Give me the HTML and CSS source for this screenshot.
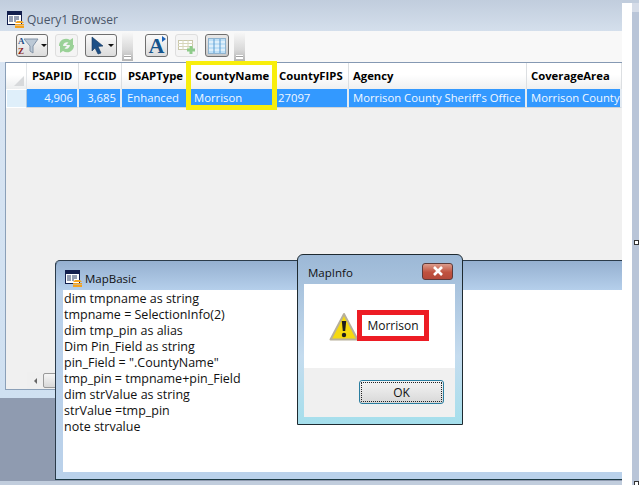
FILE: index.html
```html
<!DOCTYPE html>
<html lang="en">
<head>
<meta charset="utf-8">
<title>Query1 Browser</title>
<link rel="stylesheet" href="styles.css">
</head>
<body>
<div class="desktop">
  <section class="window browser">
    <header class="browser-title">
      <svg class="win-icon" width="17" height="17" viewBox="0 0 17 17"><rect x="0.5" y="0.5" width="14" height="13" fill="#fff" stroke="#14204e"/><rect x="1" y="1" width="13" height="3" fill="#14204e"/><path d="M2 6h4M7 6h5M2 8h4M7 8h5M2 10h4M7 10h2" stroke="#2d3f66"/><path d="M10 10h5l2 2H8zM8 13h9v1.500H8zM8 15h9v2H8z" fill="#f4a21f"/></svg>
      <span>Query1 Browser</span>
    </header>
    <div class="toolbar">
      <button class="tool drop w32 after-filter"><svg width="22" height="19" viewBox="0 0 22 19"><path d="M7 3h14l-5 7v7l-3-2v-5z" fill="#bcc9d6" stroke="#8394a8"/><text x="1" y="8" class="az az-a">A</text><text x="1" y="18" class="az az-z">Z</text></svg><i class="caret"></i></button>
      <button class="tool flat w23"><svg width="19" height="19" viewBox="0 0 19 19"><path d="M2 10a7 7 0 0 1 11-6l3-2v7H9l2.500-2.500A4 4 0 0 0 6 10zM17 9a7 7 0 0 1-11 6l-3 2v-7h7l-2.500 2.500A4 4 0 0 0 13 9z" fill="#9ad197"/></svg></button>
      <button class="tool drop w32"><svg width="17" height="19" viewBox="0 0 17 19"><path d="M3 1l11 9-5 .5 3 6.500-3 1-3-6-3 3z" fill="#1d4f86" stroke="#14375e" stroke-width=".6"/></svg><i class="caret"></i></button>
      <div class="grip"><i></i></div>
      <button class="tool w23 gap-wide font-tool"><span class="big-a">A</span><i class="font-mark"></i></button>
      <button class="tool flat w23"><svg width="20" height="18" viewBox="0 0 20 18"><rect x="1.500" y="3.500" width="14" height="9" fill="#fff" stroke="#c9c7a8"/><path d="M1 6.500h15M6 3v10M11 3v10M1 9.500h15" stroke="#d8d6b9"/><path d="M14 9v8M10 13h8" stroke="#8ecb8a" stroke-width="3"/></svg></button>
      <button class="tool w24 selected"><svg width="18" height="16" viewBox="0 0 18 16"><rect x="0.500" y="0.500" width="17" height="15" fill="#bfe0f7" stroke="#8fb3cf"/><path d="M1 4h16M1 8h16M1 12h16" stroke="#fff"/><path d="M6 1v14M12 1v14" stroke="#5a9bd0"/></svg></button>
      <div class="grip"><i></i></div>
    </div>
    <div class="table">
      <div class="corner"><svg width="12" height="12" viewBox="0 0 12 12"><path d="M11 1v10H1z" fill="#d7d9db"/></svg></div>
      <div class="th pad5">PSAPID</div>
      <div class="th pad5">FCCID</div>
      <div class="th pad6">PSAPType</div>
      <div class="th pad6">CountyName</div>
      <div class="th pad5">CountyFIPS</div>
      <div class="th">Agency</div>
      <div class="th">CoverageArea</div>
      <div class="row-head"></div>
      <div class="td num">4,906</div>
      <div class="td num">3,685</div>
      <div class="td pad5">Enhanced</div>
      <div class="td pad5">Morrison</div>
      <div class="td">27097</div>
      <div class="td">Morrison County Sheriff's Office</div>
      <div class="td">Morrison County</div>
    </div>
    <div class="table-rest">
      <div class="hscroll"><span class="arrow"></span><span class="thumb"></span></div>
    </div>
  </section>

  <div class="backdrop"></div>
  <div class="side-gutter"><i class="handle handle-mid"></i><i class="handle handle-low"></i></div>
  <div class="mark-yellow"></div>

  <section class="window mapbasic">
    <header class="mb-title">
      <svg class="win-icon" width="17" height="17" viewBox="0 0 17 17"><rect x="0.5" y="0.5" width="14" height="13" fill="#fff" stroke="#14204e"/><rect x="1" y="1" width="13" height="3" fill="#14204e"/><path d="M2 6h4M7 6h5M2 8h4M7 8h5M2 10h4M7 10h2" stroke="#2d3f66"/><path d="M10 10h5l2 2H8zM8 13h9v1.500H8zM8 15h9v2H8z" fill="#f4a21f"/></svg>
      <span>MapBasic</span>
    </header>
    <pre class="code">dim tmpname as string
tmpname = SelectionInfo(2)
dim tmp_pin as alias
Dim Pin_Field as string
pin_Field = ".CountyName"
tmp_pin = tmpname+pin_Field
dim strValue as string
strValue =tmp_pin
note strvalue</pre>
  </section>

  <section class="window dialog">
    <header class="dlg-title">
      <span>MapInfo</span>
      <button class="close"><svg width="14" height="10" viewBox="0 0 14 10"><path d="M3 1l8 8M11 1L3 9" stroke="#fff" stroke-width="2.600"/></svg></button>
    </header>
    <div class="dlg-body">
      <div class="dlg-msg">
        <svg class="warn" width="30" height="29" viewBox="0 0 30 29"><path d="M15 2L28.500 27.500H1.500z" fill="#f5d90f" stroke="#b8b09a" stroke-width="2" stroke-linejoin="round"/><path d="M12.800 9h4.400l-1 10h-2.400z" fill="#1d1d1d"/><circle cx="15" cy="23" r="2.200" fill="#1d1d1d"/></svg>
        <div class="mark-red">Morrison</div>
      </div>
      <div class="dlg-foot"><button class="ok">OK</button></div>
    </div>
  </section>
</div>
</body>
</html>
```
FILE: styles.css
```css
* { box-sizing: border-box; }
html, body { margin: 0; padding: 0; }
body { font-family: "Open Sans", "Noto Sans", sans-serif; font-size: 12px; color: #000; }
button { font: inherit; margin: 0; padding: 0; }

.desktop { position: relative; width: 639px; height: 485px; overflow: hidden; background: #c1cddd; }
.window { position: absolute; }

/* Query browser */
.browser { left: 0; top: 0; width: 622px; height: 398px; display: flex; flex-direction: column; background: linear-gradient(#dbe6f3, #cfe0f1); }
.browser-title { height: 31px; flex: none; display: flex; align-items: center; gap: 3px; padding: 7px 0 0 7px; background: linear-gradient(#c1cddd, #d4dfec); color: #4a5668; font-size: 12px; }
.win-icon { flex: none; }
.toolbar { height: 31px; flex: none; display: flex; align-items: flex-start; padding: 3px 0 0 16px; background: #f8f8f8; }
.tool { height: 23px; border: 1px solid #6f6f6f; border-radius: 3px; background: linear-gradient(#fafafa, #dcdcdc); display: flex; align-items: center; justify-content: center; gap: 2px; }
.tool.flat { border-color: #dedede; background: #f4f4f4; }
.tool.selected { background: linear-gradient(#e8e8e8, #c8c8c8); }
.w32 { width: 32px; }
.after-filter { margin-right: 7px; }
.w23 { width: 23px; margin-right: 7px; }
.w24 { width: 24px; }
.gap-wide { margin-left: 12px; }
.caret { flex: none; width: 0; height: 0; border: 3px solid transparent; border-top: 3px solid #111; border-bottom: 0; }
.grip { width: 11px; height: 29px; margin: -2px 0 0 5px; background: linear-gradient(#f8f8f8, #d9d9d9 60%, #b4b4b4); position: relative; }
.grip i { position: absolute; left: 2px; bottom: 2px; width: 7px; height: 4px; border-top: 1px solid #fff; border-bottom: 2px solid #fff; background: #a0a0a0; }
.az { font-family: "Liberation Serif", serif; font-size: 9px; font-weight: bold; }
.az-a { fill: #1d4f86; }
.az-z { fill: #8a1c1c; }
.font-tool { position: relative; }
.big-a { font-family: "Liberation Serif", serif; font-size: 22px; line-height: 21px; font-weight: bold; color: #14548c; }
.font-mark { position: absolute; right: 1px; top: 1px; width: 0; height: 0; border: 3px solid transparent; border-left: 4px solid #1b62b8; border-right: 0; }

.table { flex: none; margin-left: 5px; display: grid; grid-template-columns: 21px 52px 43px 67px 85px 75px 178px 95px; grid-template-rows: 26px 19px; border-top: 1px solid #8599b3; border-left: 1px solid #8ba0b8; background: #f0f0f0; }
.corner { background: linear-gradient(#fff 45%, #eceeef); border-right: 1px solid #e2e5e8; display: flex; align-items: flex-end; justify-content: flex-end; padding: 0 1px 2px 0; }
.th { background: linear-gradient(#fff 45%, #eff0f1); border-right: 1px solid #dcdfe2; font-weight: 700; padding: 5px 0 0 4px; white-space: nowrap; font-size: 11.300px; line-height: 16px; }
.row-head { background: #dfeffa; border: 1px solid #fff; border-right-color: #a9c6e0; }
.td { background: #3399ff; color: #f2f8ff; border-right: 2px solid #e4ebf2; border-bottom: 1px solid #cfd4d9; padding: 1px 0 0 4px; white-space: nowrap; overflow: hidden; font-size: 11.300px; line-height: 16px; }
.th.pad5, .td.pad5 { padding-left: 5px; }
.th.pad6 { padding-left: 6px; }
.td.num { text-align: right; padding: 1px 4px 0 0; }
.table-rest { flex: 1; margin: 0 0 8px 5px; border-left: 1px solid #8ba0b8; border-bottom: 1px solid #8ba0b8; background: #f0f0f0; position: relative; }
.hscroll { position: absolute; left: 21px; bottom: 0; height: 17px; width: 40px; background: #efefef; display: flex; align-items: center; padding-left: 7px; gap: 6px; }
.arrow { width: 0; height: 0; border: 3px solid transparent; border-right: 3px solid #666; border-left: 0; }
.thumb { width: 20px; height: 15px; border: 1px solid #9a9a9a; background: linear-gradient(#f6f6f6, #d8d8d8); border-radius: 2px; }

.backdrop { position: absolute; left: 0; top: 398px; width: 622px; height: 83px; background: #8f9bb0; }
.side-gutter { position: absolute; left: 622px; top: 3px; width: 17px; height: 482px; border-left: 10px solid #fff; background: linear-gradient(#d5dce8 9px, #b9c5d8 9px); }
.handle { position: absolute; left: 2px; width: 5px; height: 5px; border: 1px solid #333; background: #fff; }
.handle-mid { top: 237px; }
.handle-low { top: 478px; }

.mark-yellow { position: absolute; left: 186px; top: 61px; width: 91px; height: 49px; border: 5px solid #f8ee0c; border-top-width: 4px; }

/* MapBasic */
.mapbasic { left: 55px; top: 260px; width: 567px; height: 220px; z-index: 2; display: flex; flex-direction: column; background: linear-gradient(90deg, #2b3b4a 0, #2b3b4a 1px, transparent 1px), #bad1ea; border-top: 1px solid #2b3b4a; border-bottom: 1px solid #1d3a44; border-top-left-radius: 5px; padding: 0 0 7px 8px; }
.mb-title { height: 29px; flex: none; margin-left: -8px; padding: 5px 0 0 9px; display: flex; align-items: center; gap: 3px; background: linear-gradient(#95b0d0, #b5cfeb); font-size: 11.500px; color: #111; border-left: 1px solid #2b3b4a; border-top-left-radius: 5px; }
.code { flex: 1; margin: 0; background: #fff; padding: 1px 0 0 1px; font-family: "Open Sans", "Noto Sans", sans-serif; font-size: 12.500px; line-height: 16px; color: #111; }

/* Dialog */
.dialog { left: 297px; top: 254px; width: 166px; height: 171px; z-index: 3; border: 1px solid #1e2a30; border-radius: 6px 6px 0 0; background: linear-gradient(#9cb8d6, #c5dcef 60%, #a5dfec); padding: 0 7px 7px 6px; display: flex; flex-direction: column; }
.dlg-title { height: 29px; flex: none; display: flex; align-items: center; justify-content: space-between; padding: 5px 2px 0 4px; font-size: 11.500px; color: #111; }
.close { width: 31px; height: 17px; margin-top: -2px; border: 1px solid #5c3a3a; border-radius: 3px; background: linear-gradient(#dc9c8c, #c0523f 55%, #b4493a); display: flex; align-items: center; justify-content: center; }
.dlg-body { flex: 1; display: flex; flex-direction: column; background: #fff; }
.dlg-msg { flex: 1; display: flex; align-items: flex-start; padding: 26px 0 0 25px; }
.warn { flex: none; margin-top: 2px; margin-right: -2px; }
.mark-red { width: 72px; height: 31px; border: 5px solid #ed1c24; display: flex; align-items: center; justify-content: center; color: #111; background: #fff; }
.dlg-foot { height: 49px; flex: none; background: #f0f0f0; padding: 12px 0 0 55px; }
.ok { width: 85px; height: 24px; border: 1px solid #2a7ea0; border-radius: 3px; background: linear-gradient(#f4f4f4, #d8d8d8); outline: 1px dotted #222; outline-offset: -3px; color: #111; font-size: 12px; }
```
